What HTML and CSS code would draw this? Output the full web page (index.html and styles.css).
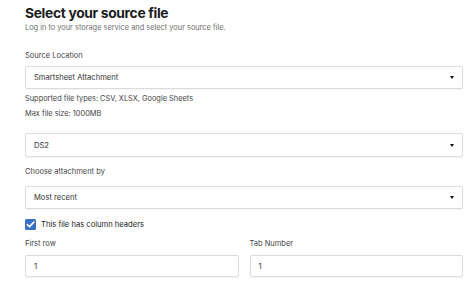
FILE: index.html
```html
<!DOCTYPE html>
<html>
<head>
<meta charset="utf-8">
<link rel="stylesheet" href="styles.css">
</head>
<body>
<main class="page">
  <h1 class="title">Select your source file</h1>
  <p class="subtitle">Log in to your storage service and select your source file.</p>

  <div class="field field-first">
    <label class="label">Source Location</label>
    <div class="select"><span>Smartsheet Attachment</span><span class="caret"></span></div>
  </div>
  <p class="hint hint-1">Supported file types: CSV, XLSX, Google Sheets</p>
  <p class="hint hint-2">Max file size: 1000MB</p>

  <div class="select select-ds"><span>DS2</span><span class="caret"></span></div>

  <div class="field field-choose">
    <label class="label">Choose attachment by</label>
    <div class="select"><span>Most recent</span><span class="caret"></span></div>
  </div>

  <div class="check">
    <span class="box"><svg width="11" height="11" viewBox="0 0 11 11"><path d="M2.3 5.6 L4.5 7.8 L8.8 3.1" fill="none" stroke="#fff" stroke-width="1.6" stroke-linecap="round" stroke-linejoin="round"/></svg></span>
    <span class="check-text">This file has column headers</span>
  </div>

  <div class="row">
    <div class="field">
      <label class="label">First row</label>
      <div class="input">1</div>
    </div>
    <div class="field">
      <label class="label">Tab Number</label>
      <div class="input">1</div>
    </div>
  </div>
</main>
</body>
</html>
```

FILE: styles.css
```css
* { box-sizing: border-box; }
html, body { margin: 0; padding: 0; background: #fff; }
body {
  font-family: Inter, "Noto Sans", sans-serif;
  color: #333;
  width: 474px;
  height: 295px;
  overflow: hidden;
}
.page {
  padding: 0 11px 0 25px;
  display: flex;
  flex-direction: column;
}
.title {
  margin: 4px 0 0 0;
  font-size: 13.8px;
  line-height: 18px;
  font-weight: 700;
  color: #1b1b1b;
  letter-spacing: -0.32px;
}
.subtitle {
  margin: 1px 0 0 0;
  font-size: 7.4px;
  line-height: 10px;
  color: #6f6f6f;
}
.field { display: flex; flex-direction: column; }
.field-first { margin-top: 18px; }
.label {
  font-size: 7.5px;
  line-height: 10px;
  color: #444;
  margin-bottom: 5px;
}
.select, .input {
  height: 23px;
  border: 1px solid #dcdcdc;
  border-radius: 2px;
  box-shadow: 0 1px 1px rgba(0,0,0,0.04);
  display: flex;
  align-items: center;
  justify-content: space-between;
  padding: 0 8px 0 8px;
  font-size: 7.6px;
  color: #333;
  background: #fff;
}
.caret {
  width: 0; height: 0;
  border-left: 2.5px solid transparent;
  border-right: 2.5px solid transparent;
  border-top: 3.5px solid #111;
}
.hint {
  margin: 0;
  font-size: 7.4px;
  line-height: 10px;
  color: #444;
}
.hint-1 { margin-top: 5px; }
.hint-2 { margin-top: 5px; }
.select-ds { margin-top: 14px; height: 24px; }
.field-choose { margin-top: 10px; }
.field-choose .label { margin-bottom: 9px; }
.check {
  margin-top: 10px;
  display: flex;
  align-items: center;
  gap: 5px;
  height: 11px;
}
.box {
  width: 11px; height: 11px;
  background: #3a6fc7;
  border-radius: 1.5px;
  display: flex;
}
.check-text { font-size: 7.6px; color: #222; }
.row {
  margin-top: 9px;
  display: grid;
  grid-template-columns: 1fr 1fr;
  column-gap: 11px;
}
.row .label { margin-bottom: 6px; }
.input { justify-content: flex-start; height: 22px; }
```
